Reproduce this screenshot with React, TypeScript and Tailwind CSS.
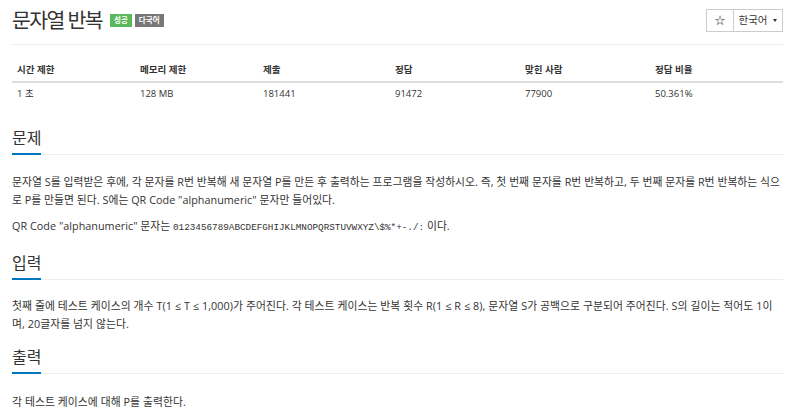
import React from 'react';

// ============================================
// Data
// ============================================

const stats = [
  { label: '시간 제한', value: '1 초' },
  { label: '메모리 제한', value: '128 MB' },
  { label: '제출', value: '181441' },
  { label: '정답', value: '91472' },
  { label: '맞힌 사람', value: '77900' },
  { label: '정답 비율', value: '50.361%' },
];

// ============================================
// Pieces
// ============================================

function Headline({ title, className }: { title: string; className?: string }) {
  return (
    <div className={'flex border-b border-[#eee] ' + (className ?? '')}>
      <h2 className="-mb-px border-b-2 border-[#0076c0] pb-[4px] text-[16px] leading-[21px] font-normal text-[#333]">
        {title}
      </h2>
    </div>
  );
}

function Badge({ children, color }: { children: React.ReactNode; color: string }) {
  return (
    <span
      className={
        'inline-flex h-[13px] items-center px-[4px] text-[7.5px] font-bold leading-none text-white ' + color
      }
    >
      {children}
    </span>
  );
}

// ============================================
// Page
// ============================================

export default function App() {
  return (
    <div className="h-[414px] w-[800px] overflow-hidden bg-white pl-[12px] pr-[17px] font-['Open_Sans','Noto_Sans_CJK_KR',sans-serif] text-[#333]">
      {/* Page header */}
      <div className="flex items-center justify-between border-b border-[#eee] pt-[9px] pb-[12px]">
        <div className="flex items-center gap-[3px]">
          <h1 className="mr-[5px] text-[20.5px] leading-[23px] font-normal tracking-[-1.6px]">문자열 반복</h1>
          <Badge color="bg-[#5cb85c]">성공</Badge>
          <Badge color="bg-[#777]">다국어</Badge>
        </div>
        <div className="flex h-[23px] text-[10.5px]">
          <button className="flex w-[28px] items-center justify-center border border-[#ccc] bg-white">☆</button>
          <button className="-ml-px flex w-[50px] items-center justify-center gap-[6px] border border-[#ccc] bg-white">
            한국어
            <span className="h-0 w-0 border-x-[2.5px] border-t-[3px] border-x-transparent border-t-[#333]" />
          </button>
        </div>
      </div>

      {/* Stats table */}
      <div className="mt-[15px] text-[9.5px]">
        <div className="grid h-[23px] grid-cols-[123px_123px_132px_130px_130px_1fr] items-center border-b-2 border-[#ddd] font-bold">
          {stats.map((s) => (
            <div key={s.label} className="px-[5px]">
              {s.label}
            </div>
          ))}
        </div>
        <div className="grid h-[22px] grid-cols-[123px_123px_132px_130px_130px_1fr] items-center">
          {stats.map((s) => (
            <div key={s.label} className="px-[5px]">
              {s.value}
            </div>
          ))}
        </div>
      </div>

      {/* Problem */}
      <Headline title="문제" className="mt-[23px]" />
      <div className="mt-[18px] text-[10.8px] leading-[18px] tracking-[0.03px]">
        <p>
          문자열 S를 입력받은 후에, 각 문자를 R번 반복해 새 문자열 P를 만든 후 출력하는 프로그램을 작성하시오. 즉, 첫 번째 문자를
          R번 반복하고, 두 번째 문자를 R번 반복하는 식으로 P를 만들면 된다. S에는 QR Code "alphanumeric" 문자만 들어있다.
        </p>
        <p className="mt-[8px]">
          QR Code "alphanumeric" 문자는{' '}
          <code className="font-['Liberation_Mono',monospace] text-[9.3px] tracking-normal">
            0123456789ABCDEFGHIJKLMNOPQRSTUVWXYZ\$%*+-./:
          </code>{' '}
          이다.
        </p>
      </div>

      {/* Input */}
      <Headline title="입력" className="mt-[16px]" />
      <div className="mt-[17px] text-[10.8px] leading-[18px] tracking-[0.07px]">
        <p>
          첫째 줄에 테스트 케이스의 개수 T(1 ≤ T ≤ 1,000)가 주어진다. 각 테스트 케이스는 반복 횟수 R(1 ≤ R ≤ 8), 문자열 S가 공백으로
          구분되어 주어진다. S의 길이는 적어도 1이며, 20글자를 넘지 않는다.
        </p>
      </div>

      {/* Output */}
      <Headline title="출력" className="mt-[14px]" />
      <div className="mt-[19px] text-[10.8px] leading-[18px] tracking-[0.07px]">
        <p>각 테스트 케이스에 대해 P를 출력한다.</p>
      </div>
    </div>
  );
}
